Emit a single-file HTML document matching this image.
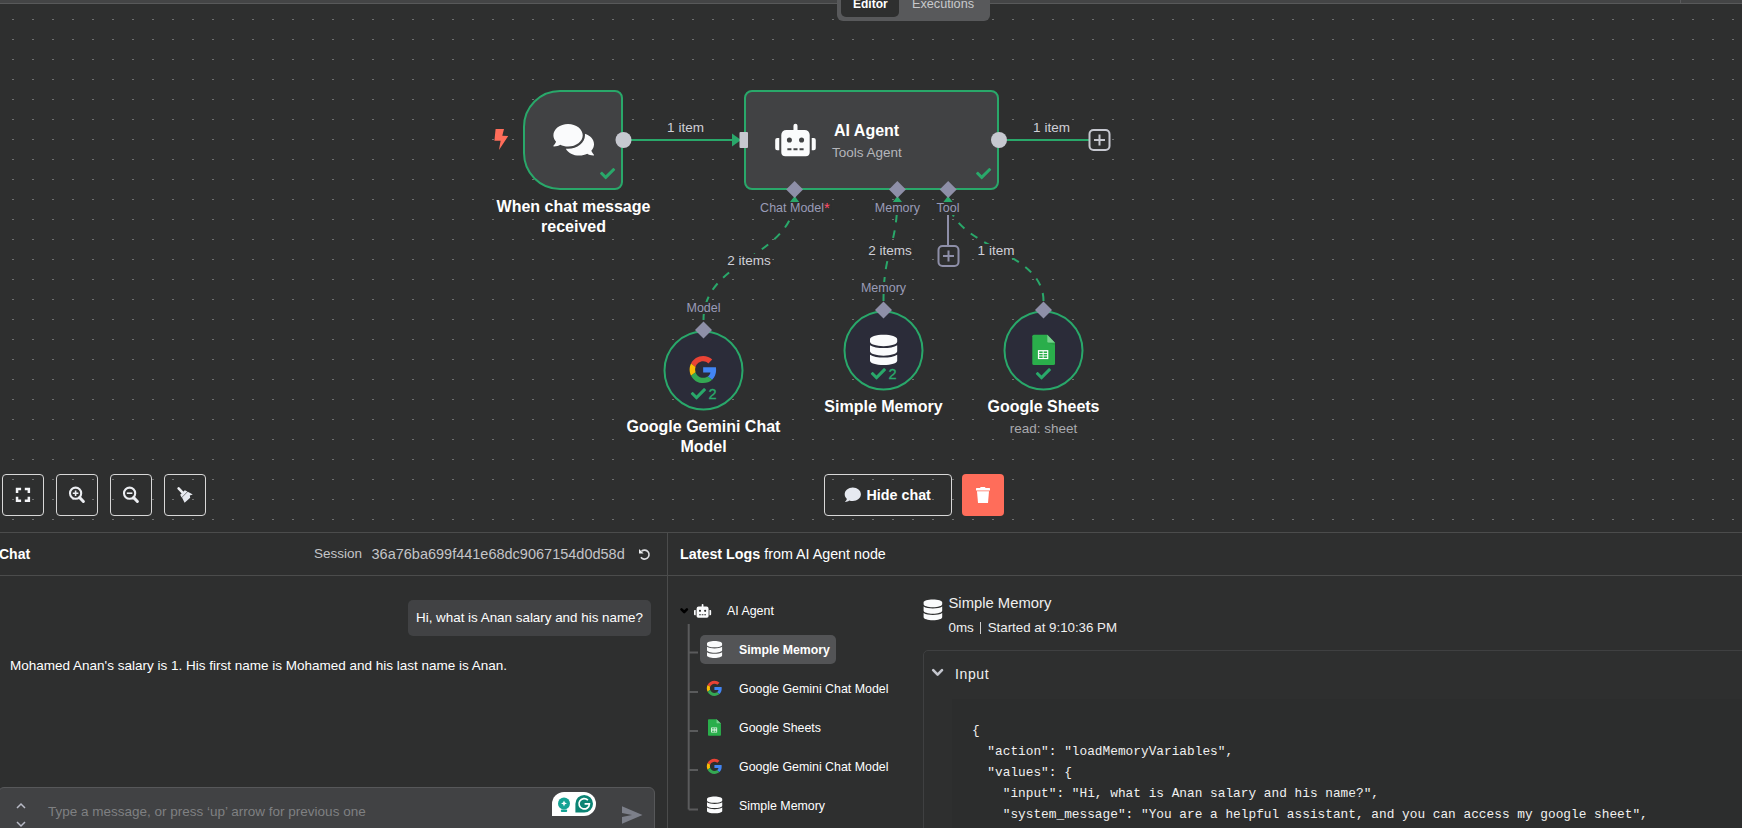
<!DOCTYPE html>
<html><head><meta charset="utf-8">
<style>
*{box-sizing:border-box;margin:0;padding:0}
html,body{width:1742px;height:828px;overflow:hidden;background:#2e2f2f;font-family:"Liberation Sans",sans-serif;color:#fff}
.abs{position:absolute}
.t{position:absolute;white-space:nowrap;line-height:1}
#topbar{position:absolute;left:0;top:0;width:1742px;height:4px;background:#444546;border-bottom:1px solid #58595a}
#tabs{position:absolute;left:837px;top:-6px;width:153px;height:27px;background:#58595b;border-radius:6px}
#tabEd{position:absolute;left:4px;top:0;width:58px;height:23px;background:#2e2f2f;border-radius:5px}
.lbl{position:absolute;white-space:nowrap;line-height:1;text-align:center;transform:translateX(-50%)}
.nodename{font-weight:700;font-size:16px;color:#fff;line-height:20px}
.hlabel{font-size:12.5px;color:#9a9cb8;background:#2e2f2f;padding:0 1px}
.elabel{font-size:13.5px;color:#d0d0d8;background:#2e2f2f;padding:0 1px}
.btn{position:absolute;width:42px;height:42px;border:1px solid #d8d8d8;border-radius:4px}
#panel{position:absolute;left:0;top:532px;width:1742px;height:296px;background:#2e2f2f;border-top:1px solid #4b4c4c}
</style></head><body>
<div id="topbar"></div>
<div class="abs" style="left:1680px;top:0;width:1px;height:3px;background:#5a5b5d"></div>
<svg class="abs" style="left:0;top:0" width="1742" height="532">
<defs>
<pattern id="dots" x="0" y="0" width="20" height="20" patternUnits="userSpaceOnUse"><rect x="12" y="19" width="2" height="1" fill="#6e6f70"/></pattern>
</defs>
<rect x="0" y="4" width="1742" height="528" fill="url(#dots)"/>
</svg>
<div id="tabs"><div id="tabEd"></div>
<div class="t" style="left:16px;top:4px;font-size:12px;font-weight:700;color:#fff">Editor</div>
<div class="t" style="left:75px;top:4px;font-size:12.7px;color:#c8c9cc">Executions</div>
</div>

<svg class="abs" style="left:0;top:0" width="1742" height="532">
<g fill="none" stroke="#29a86a" stroke-width="2">
<path d="M624 140 H733"/>
<path d="M1007 140 H1089"/>
<path d="M703.5 320 C703.5 258 795 258 795 196" stroke-dasharray="8 8"/>
<path d="M883.5 301 C883.5 248.5 897.4 248.5 897.4 196" stroke-dasharray="8 8"/>
<path d="M1043.5 301 C1043.5 248.5 948 248.5 948 196" stroke-dasharray="8 8"/>
</g>
<path d="M732 133.5 L741 140 L732 146.5 Z" fill="#29a86a"/>
<!-- trigger node -->
<path d="M560 91 H615 A7 7 0 0 1 622 98 V182 A7 7 0 0 1 615 189 H560 A36 36 0 0 1 524 153 V127 A36 36 0 0 1 560 91 Z" fill="#414244" stroke="#29a86a" stroke-width="2"/>
<circle cx="623.5" cy="140" r="8" fill="#c6c8d0"/>
<!-- agent node -->
<rect x="745" y="91" width="253" height="98" rx="7" fill="#414244" stroke="#29a86a" stroke-width="2"/>
<circle cx="999" cy="140" r="8" fill="#c6c8d0"/>
<rect x="739.5" y="132" width="8.5" height="16" rx="1" fill="#c6c8d0"/>
<rect x="1089.5" y="130" width="20" height="20" rx="4" fill="#2e2f2f" stroke="#c6c8d0" stroke-width="2"/>
<path d="M1099.5 134.5 V145.5 M1094 140 H1105" stroke="#c6c8d0" stroke-width="2"/>
<!-- tool plus -->
<path d="M948 200 V246" stroke="#8e8fa8" stroke-width="2"/>
<rect x="938.5" y="246" width="20" height="20" rx="4" fill="#2e2f2f" stroke="#8e8fa8" stroke-width="2"/>
<path d="M948.5 250.5 V261.5 M943 256 H954" stroke="#8e8fa8" stroke-width="2"/>
<!-- arrowheads under agent -->
<path d="M790 202 L794.6 196 L799.2 202 Z M892.8 202 L897.4 196 L902 202 Z M943.4 202 L948 196 L952.6 202 Z" fill="#29a86a"/>
<!-- sub node circles -->
<circle cx="703.5" cy="370.5" r="39" fill="#2b2c39" stroke="#29a86a" stroke-width="2"/>
<circle cx="883.5" cy="350.5" r="39" fill="#2b2c39" stroke="#29a86a" stroke-width="2"/>
<circle cx="1043.5" cy="350.5" r="39" fill="#2b2c39" stroke="#29a86a" stroke-width="2"/>
<!-- diamonds -->
<g fill="#8e8fa8">
<rect x="-6" y="-6" width="12" height="12" transform="translate(794.6 189.6) rotate(45)"/>
<rect x="-6" y="-6" width="12" height="12" transform="translate(897.4 189.6) rotate(45)"/>
<rect x="-6" y="-6" width="12" height="12" transform="translate(948.2 189.6) rotate(45)"/>
<rect x="-6" y="-6" width="12" height="12" transform="translate(703.5 330) rotate(45)"/>
<rect x="-6" y="-6" width="12" height="12" transform="translate(883.5 310) rotate(45)"/>
<rect x="-6" y="-6" width="12" height="12" transform="translate(1043.5 310) rotate(45)"/>
</g>
</svg>
<div class="lbl hlabel" style="left:795px;top:202px">Chat Model<span style="color:#ff4d6a;font-size:15px;line-height:0;vertical-align:-1px">*</span></div>
<div class="lbl hlabel" style="left:897.4px;top:202px">Memory</div>
<div class="lbl hlabel" style="left:948px;top:202px">Tool</div>
<div class="lbl hlabel" style="left:703.5px;top:301.5px">Model</div>
<div class="lbl hlabel" style="left:883.5px;top:281.5px">Memory</div>
<div class="lbl elabel" style="left:685.5px;top:121px">1 item</div>
<div class="lbl elabel" style="left:1051.5px;top:121px">1 item</div>
<div class="lbl elabel" style="left:749px;top:254px">2 items</div>
<div class="lbl elabel" style="left:890px;top:244px">2 items</div>
<div class="lbl elabel" style="left:996px;top:244px">1 item</div>
<div class="lbl nodename" style="left:573.5px;top:197px">When chat message<br>received</div>
<div class="t" style="left:834px;top:123px;font-size:16px;font-weight:700">AI Agent</div>
<div class="t" style="left:832px;top:145.5px;font-size:13.5px;color:#b4b5bb">Tools Agent</div>
<div class="lbl nodename" style="left:703.5px;top:417px">Google Gemini Chat<br>Model</div>
<div class="lbl nodename" style="left:883.5px;top:397px">Simple Memory</div>
<div class="lbl nodename" style="left:1043.5px;top:397px">Google Sheets</div>
<div class="lbl" style="left:1043.5px;top:422px;font-size:13.5px;color:#a9aaae">read: sheet</div>


<svg class="abs" style="left:0;top:0" width="1742" height="532">
<defs>
<path id="fachk" d="M173.898 439.404l-166.4-166.4c-9.997-9.997-9.997-26.206 0-36.204l36.203-36.204c9.997-9.998 26.207-9.998 36.204 0L192 312.69 432.095 72.596c9.997-9.997 26.207-9.997 36.204 0l36.203 36.204c9.997 9.997 9.997 26.206 0 36.204l-294.4 294.401c-9.998 9.997-26.207 9.997-36.204-.001z"/>
<path id="fadb" d="M448 73.143v45.714C448 159.143 347.667 192 224 192S0 159.143 0 118.857V73.143C0 32.857 100.333 0 224 0s224 32.857 224 73.143zM448 176v102.857C448 319.143 347.667 352 224 352S0 319.143 0 278.857V176c48.125 33.143 136.208 48.572 224 48.572S399.874 209.143 448 176zm0 160v102.857C448 479.143 347.667 512 224 512S0 479.143 0 438.857V336c48.125 33.143 136.208 48.572 224 48.572S399.874 369.143 448 336z"/>
<path id="farobot" d="M32,224H64V416H32A31.96166,31.96166,0,0,1,0,384V256A31.96166,31.96166,0,0,1,32,224Zm512-48V448a64.06328,64.06328,0,0,1-64,64H160a64.06328,64.06328,0,0,1-64-64V176a79.974,79.974,0,0,1,80-80H288V32a32,32,0,0,1,64,0V96H464A79.974,79.974,0,0,1,544,176ZM264,256a40,40,0,1,0-40,40A39.997,39.997,0,0,0,264,256Zm-8,128H192v32h64Zm96,0H288v32h64ZM456,256a40,40,0,1,0-40,40A39.997,39.997,0,0,0,456,256Zm-8,128H384v32h64ZM640,256V384a31.96166,31.96166,0,0,1-32,32H576V224h32A31.96166,31.96166,0,0,1,640,256Z"/>
<g id="gg">
<path fill="#EA4335" d="M24 9.5c3.54 0 6.71 1.22 9.21 3.6l6.85-6.85C35.9 2.38 30.47 0 24 0 14.62 0 6.51 5.38 2.56 13.22l7.98 6.19C12.43 13.720 17.74 9.5 24 9.5z"/>
<path fill="#4285F4" d="M46.98 24.55c0-1.57-.15-3.09-.38-4.55H24v9.02h12.94c-.58 2.96-2.26 5.480-4.78 7.18l7.73 6c4.51-4.18 7.09-10.36 7.09-17.65z"/>
<path fill="#FBBC05" d="M10.53 28.59c-.48-1.45-.76-2.99-.76-4.59s.27-3.14.76-4.59l-7.98-6.19C.92 16.46 0 20.12 0 24c0 3.88.92 7.54 2.56 10.78l7.97-6.19z"/>
<path fill="#34A853" d="M24 48c6.48 0 11.930-2.13 15.89-5.81l-7.73-6c-2.15 1.45-4.92 2.3-8.16 2.3-6.26 0-11.57-4.22-13.47-9.91l-7.98 6.19C6.51 42.62 14.62 48 24 48z"/>
</g>
<g id="gsheet">
<path d="M1.5 0 H15 L22.7 8 V28.8 Q22.7 30.3 21.2 30.3 H1.5 Q0 30.3 0 28.8 V1.5 Q0 0 1.5 0 Z" fill="#2aae4b"/>
<path d="M15 0 L22.7 8 H16.5 Q15 8 15 6.5 Z" fill="#79d08f"/>
<path d="M15 8 L22.7 8 V10.5 Z" fill="#23983f" opacity="0.6"/>
<rect x="5.6" y="15.3" width="10.4" height="9" fill="#fff"/>
<g fill="#2aae4b"><rect x="6.9" y="16.6" width="3.5" height="1.6"/><rect x="11.3" y="16.6" width="3.5" height="1.6"/><rect x="6.9" y="19.1" width="3.5" height="1.6"/><rect x="11.3" y="19.1" width="3.5" height="1.6"/><rect x="6.9" y="21.6" width="3.5" height="1.6"/><rect x="11.3" y="21.6" width="3.5" height="1.6"/></g>
</g>
</defs>
<!-- bolt -->
<path d="M495.6 129 L504 129 L502.3 135.7 L508.2 135.9 L499 150 L500.6 140.8 L494.4 140.8 Z" fill="#ff6d5a"/>
<!-- comments -->
<path fill="#fafbfc" transform="translate(553.4 121.74) scale(0.0705)" d="M416 192c0-88.4-93.1-160-208-160S0 103.6 0 192c0 34.3 14.1 65.9 38 92-13.4 30.2-35.5 54.2-35.8 54.5-2.2 2.3-2.8 5.7-1.5 8.7S4.8 352 8 352c36.6 0 66.9-12.3 88.7-25 32.2 15.7 70.3 25 111.3 25 114.9 0 208-71.6 208-160zm122 220c23.9-26 38-57.700 38-92 0-66.9-53.5-124.2-129.3-148.1.9 6.6 1.3 13.3 1.3 20.1 0 105.9-107.7 192-240 192-10.8 0-21.3-.8-31.7-1.9C207.8 439.6 281.8 480 368 480c41 0 79.1-9.2 111.3-25 21.8 12.7 52.1 25 88.7 25 3.2 0 6.1-1.9 7.3-4.8 1.3-2.9.7-6.3-1.5-8.7-.3-.3-22.4-24.2-35.8-54.5z"/>
<!-- checks on nodes -->
<use href="#fachk" fill="#29a86a" transform="translate(600 166) scale(0.0297)"/>
<use href="#fachk" fill="#29a86a" transform="translate(976 166) scale(0.0297)"/>
<!-- robot -->
<use href="#farobot" fill="#fafbfc" transform="translate(775.2 123.8) scale(0.0634)"/>
<!-- google G -->
<use href="#gg" transform="translate(689.6 356) scale(0.5646)"/>
<use href="#fachk" fill="#29a86a" transform="translate(690.8 386.2) scale(0.0297)"/>
<!-- database -->
<use href="#fadb" fill="#fafbfc" transform="translate(870 334.8) scale(0.0607 0.0592)"/>
<use href="#fachk" fill="#29a86a" transform="translate(870.8 366.2) scale(0.0297)"/>
<!-- sheets -->
<use href="#gsheet" transform="translate(1032.3 334.8)"/>
<use href="#fachk" fill="#29a86a" transform="translate(1035.8 366.2) scale(0.0297)"/>
</svg>
<div class="t" style="left:708.6px;top:386.6px;font-size:14.6px;-webkit-text-stroke:0.4px #29a86a;color:#29a86a">2</div>
<div class="t" style="left:888.6px;top:366.6px;font-size:14.6px;-webkit-text-stroke:0.4px #29a86a;color:#29a86a">2</div>

<div class="btn" style="left:2px;top:474px"></div>
<div class="btn" style="left:56px;top:474px"></div>
<div class="btn" style="left:110px;top:474px"></div>
<div class="btn" style="left:164px;top:474px"></div>
<div class="abs" style="left:824px;top:474px;width:128px;height:42px;border:1px solid #d8d8d8;border-radius:4px"></div>
<div class="abs" style="left:962px;top:474px;width:42px;height:42px;background:#ff6d5a;border-radius:4px"></div>
<div class="t" style="left:866.5px;top:488px;font-size:14.3px;font-weight:700;color:#fff">Hide chat</div>
<svg class="abs" style="left:0;top:0" width="1742" height="532">
<g fill="#f4f5f8">
<path d="M15.8 487.8 H21.1 V490.3 H18.3 V493.1 H15.8 Z"/>
<path d="M30.1 487.8 H24.8 V490.3 H27.6 V493.1 H30.1 Z"/>
<path d="M15.8 502.1 H21.1 V499.6 H18.3 V496.8 H15.8 Z"/>
<path d="M30.1 502.1 H24.8 V499.6 H27.6 V496.8 H30.1 Z"/>
</g>
<g fill="none" stroke="#eceef2">
<circle cx="75.6" cy="493.2" r="5.6" stroke-width="2.1"/>
<path d="M79.6 497.5 L83.4 501.5" stroke-width="3" stroke-linecap="round"/>
<path d="M75.6 490.4 V496 M72.8 493.2 H78.4" stroke-width="1.6"/>
<circle cx="129.6" cy="493.2" r="5.6" stroke-width="2.1"/>
<path d="M133.6 497.5 L137.4 501.5" stroke-width="3" stroke-linecap="round"/>
<path d="M126.8 493.2 H132.4" stroke-width="1.6"/>
<path d="M178.6 488.4 L182.4 492.4" stroke-width="2.6" stroke-linecap="round"/>
</g>
<g fill="#e6e9f0">
<path d="M180.2 494.8 L184.8 490.2 L187.4 491.6 L181.6 497.4 Z"/>
<path d="M182 497.6 L187.8 491.8 L192.8 494.6 L189.8 495.6 L190.2 497.8 L184.6 502.8 Z"/>
</g>
<path fill="#e6e9f0" d="M852.8 487.6 C857.3 487.6 860.9 490.6 860.9 494.35 C860.9 498.1 857.3 501.1 852.8 501.1 C851.5 501.1 850.3 500.9 849.2 500.5 C847.8 501.6 846.3 502 844.9 501.9 C845.9 501 846.6 500 846.9 498.9 C845.4 497.7 844.7 496.1 844.7 494.35 C844.7 490.6 848.3 487.6 852.8 487.6 Z"/>
<g fill="#fff">
<rect x="976" y="488" width="14" height="2.4" rx="0.5"/>
<rect x="980.2" y="487" width="5.2" height="2" rx="0.8"/>
<path d="M977 491.2 H989 L988 503 H978 Z"/>
</g>
</svg>
<div id="panel"></div>
<div class="abs" style="left:0;top:575px;width:1742px;height:1px;background:#4b4c4c"></div>
<div class="abs" style="left:667px;top:533px;width:1px;height:295px;background:#4b4c4c"></div>
<!-- chat header -->
<div class="t" style="left:-1px;top:547px;font-size:14px;font-weight:700;color:#fff">Chat</div>
<div class="t" style="left:314px;top:547px;font-size:13.5px;color:#c4c5c8">Session</div>
<div class="t" style="left:371.5px;top:547px;font-size:14.5px;color:#c4c5c8">36a76ba699f441e68dc9067154d0d58d</div>
<svg class="abs" style="left:636px;top:546px" width="16" height="16" viewBox="0 0 16 16"><path d="M5.6 5.2 A4.5 4.5 0 1 1 4.9 11.3" fill="none" stroke="#dcdde0" stroke-width="1.6"/><path d="M3 2.9 L3 7.5 L7.6 7.5 Z" fill="#eceef0"/></svg>
<!-- chat messages -->
<div class="abs" style="left:408px;top:600px;width:243px;height:36px;background:#414244;border-radius:5px"></div>
<div class="t" style="left:416px;top:611px;font-size:13.4px;color:#fff">Hi, what is Anan salary and his name?</div>
<div class="t" style="left:10px;top:659px;font-size:13.5px;color:#fff">Mohamed Anan's salary is 1. His first name is Mohamed and his last name is Anan.</div>
<!-- input -->
<div class="abs" style="left:-2px;top:787px;width:657px;height:60px;background:#414244;border:1px solid #57585a;border-radius:6px"></div>
<svg class="abs" style="left:14px;top:800px" width="14" height="28"><path d="M3 8 L7 4 L11 8" fill="none" stroke="#b8bac6" stroke-width="1.5"/><path d="M3 22 L7 26 L11 22" fill="none" stroke="#b8bac6" stroke-width="1.5"/></svg>
<div class="t" style="left:48px;top:805px;font-size:13.5px;color:#7f8082">Type a message, or press ‘up’ arrow for previous one</div>
<svg class="abs" style="left:552px;top:792px" width="46" height="26">
<path d="M12 0 H32 A12 12 0 0 1 32 24 H0 V12 A12 12 0 0 1 12 0 Z" fill="#fff"/>
<circle cx="12" cy="11.4" r="6" fill="#15a394"/><rect x="8.8" y="17.6" width="6.4" height="2.4" rx="1.1" fill="#15a394"/>
<path d="M12 8.4 L12.9 10.5 L15 11.4 L12.9 12.3 L12 14.4 L11.1 12.3 L9 11.4 L11.1 10.5 Z" fill="#fff"/>
<path d="M23.4 20.6 V11.8 A8.8 8.8 0 1 1 32.2 20.6 Z" fill="#0b8474"/>
<path d="M35.9 8.1 A5.2 5.2 0 1 0 37.4 11.9 H32.6" fill="none" stroke="#fff" stroke-width="1.7"/>
</svg>
<svg class="abs" style="left:620px;top:804px" width="24" height="22"><path d="M2 2.2 L22.5 11 L2 19.8 L2 13 L12 11 L2 9 Z" fill="#7c7f89"/></svg>
<!-- logs header -->
<div class="t" style="left:680px;top:547px;font-size:14.3px;color:#fff"><b>Latest Logs</b> from AI Agent node</div>
<!-- tree -->
<svg class="abs" style="left:676px;top:598px" width="240" height="230">
<path d="M5.5 11.3 L8.2 14 L10.9 11.3" fill="none" stroke="#000" stroke-width="2.6" stroke-linecap="round" stroke-linejoin="round"/>
<path d="M12.7 26 V211.5 M12.7 54.5 H22 M12.7 94 H22 M12.7 133 H22 M12.7 172 H22 M12.7 211.5 H22" stroke="#5a5b5c" stroke-width="2" fill="none"/>
</svg>
<div class="abs" style="left:700px;top:635px;width:136px;height:29px;background:#535456;border-radius:5px"></div>
<div class="t" style="left:727px;top:605px;font-size:12.4px;color:#fff">AI Agent</div>
<div class="t" style="left:739px;top:643.5px;font-size:12.3px;font-weight:700;color:#fff">Simple Memory</div>
<div class="t" style="left:739px;top:683px;font-size:12.4px;color:#fff">Google Gemini Chat Model</div>
<div class="t" style="left:739px;top:722px;font-size:12.4px;color:#fff">Google Sheets</div>
<div class="t" style="left:739px;top:761px;font-size:12.4px;color:#fff">Google Gemini Chat Model</div>
<div class="t" style="left:739px;top:800px;font-size:12.4px;color:#fff">Simple Memory</div>
<svg class="abs" style="left:0;top:0" width="1742" height="828">
<use href="#farobot" fill="#fafbfc" transform="translate(694 604) scale(0.0268)"/>
<use href="#fadb" fill="#fafbfc" transform="translate(707 641) scale(0.0337 0.0332)"/>
<use href="#gg" transform="translate(706.8 680.7) scale(0.317)"/>
<use href="#gsheet" transform="translate(708 719.2) scale(0.57 0.545)"/>
<use href="#gg" transform="translate(706.8 758.7) scale(0.317)"/>
<use href="#fadb" fill="#fafbfc" transform="translate(707 796.6) scale(0.034 0.0326)"/>
<use href="#fadb" fill="#fafbfc" transform="translate(923.6 599.4) scale(0.0415 0.0406)"/>
</svg>
<!-- details -->
<div class="t" style="left:948.5px;top:596px;font-size:14.8px;color:#f0f0f0">Simple Memory</div>
<div class="t" style="left:948.5px;top:621px;font-size:13.4px;color:#f0f0f0">0ms</div>
<div class="abs" style="left:980px;top:621.5px;width:1px;height:12.5px;background:#d0d0d0"></div>
<div class="t" style="left:987.7px;top:621px;font-size:13.3px;color:#f0f0f0">Started at 9:10:36 PM</div>
<div class="abs" style="left:923px;top:650px;width:830px;height:200px;border:1px solid #3f4041;border-radius:5px"></div>
<svg class="abs" style="left:930px;top:666px" width="16" height="14"><path d="M3.2 4.2 L7.6 8.6 L12 4.2" fill="none" stroke="#c4c6ce" stroke-width="2.6" stroke-linecap="round" stroke-linejoin="round"/></svg>
<div class="t" style="left:955px;top:667px;font-size:14px;letter-spacing:0.6px;color:#f0f0f0">Input</div>
<div class="abs" style="left:952px;top:699px;width:800px;height:140px;background:#2c2d2d"></div>
<pre class="abs" style="left:972px;top:719.5px;font-family:'Liberation Mono',monospace;font-size:12.8px;line-height:21px;color:#f0f0f0">{
  "action": "loadMemoryVariables",
  "values": {
    "input": "Hi, what is Anan salary and his name?",
    "system_message": "You are a helpful assistant, and you can access my google sheet",
</pre>

</body></html>
